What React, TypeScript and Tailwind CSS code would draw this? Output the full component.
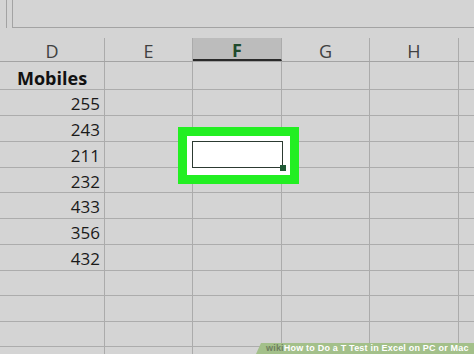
import React from "react";

const rowHeights = [28, 26, 26, 26, 25, 26, 26, 26, 25, 26, 25, 30];
const values: (string | null)[] = ["Mobiles", "255", "243", "211", "232", "433", "356", "432", null, null, null, null];

export default function App() {
  return (
    <div
      className="relative w-[474px] h-[354px] overflow-hidden bg-[#d4d4d4]"
      style={{ fontFamily: '"Open Sans", "Noto Sans", sans-serif' }}
    >
      {/* formula bar */}
      <div className="flex h-[28px]">
        <div className="w-[7px] border-r border-[#a3a3a3]" />
        <div className="w-[5px]" />
        <div className="flex-1 border-l border-b border-[#a3a3a3]" />
      </div>
      <div className="h-[10px]" />
      {/* header row */}
      <div className="grid grid-cols-[105px_88px_89px_88px_89px_1fr] h-[24px] border-b border-[#a3a3a3]">
        <div className="flex items-center justify-center pt-[3px] border-r border-[#ababab] text-[18px] text-[#404040] leading-none">D</div>
        <div className="flex items-center justify-center pt-[3px] border-r border-[#ababab] text-[18px] text-[#404040] leading-none">E</div>
        <div className="flex items-center justify-center pt-[3px] border-r border-[#ababab] bg-[#bcbcbc] border-b-2 border-b-[#2a2a2a] text-[18px] font-bold text-[#1f4a2c] leading-none">F</div>
        <div className="flex items-center justify-center pt-[3px] border-r border-[#ababab] text-[18px] text-[#404040] leading-none">G</div>
        <div className="flex items-center justify-center pt-[3px] border-r border-[#ababab] text-[18px] text-[#404040] leading-none">H</div>
        <div />
      </div>
      {/* data rows */}
      {rowHeights.map((h, i) => (
        <div
          key={i}
          className="grid grid-cols-[105px_88px_89px_88px_89px_1fr] border-b border-[#acacac]"
          style={{ height: h }}
        >
          <div
            className={
              i === 0
                ? "flex items-center pl-[17px] pt-[3px] border-r border-[#ababab] text-[18px] font-bold text-[#111]"
                : "flex items-center justify-end pr-[4px] pt-[1px] border-r border-[#ababab] text-[17px] text-[#1a1a1a]"
            }
          >
            {values[i]}
          </div>
          <div className="border-r border-[#ababab]" />
          <div className="border-r border-[#ababab]" />
          <div className="border-r border-[#ababab]" />
          <div className="border-r border-[#ababab]" />
          <div />
        </div>
      ))}

      {/* green highlight around selected cell */}
      <div className="absolute left-[178px] top-[127px] w-[121px] h-[57px] border-[9px] border-[#22ef22] bg-white">
        <div className="absolute left-[5px] top-[5px] w-[91px] h-[27px] border-[1.5px] border-[#2c3a31] bg-white">
          <div className="absolute right-[-4px] bottom-[-4px] w-[6px] h-[6px] bg-[#1f5a35]" />
        </div>
      </div>

      {/* wikiHow banner */}
      <div
        className="absolute right-0 bottom-0 h-[11px] w-[218px] bg-[#a3c08a] flex items-center pl-[10px]"
        style={{ clipPath: "polygon(5px 0, 100% 0, 100% 100%, 0 100%)" }}
      >
        <span
          className="text-[9px] font-bold leading-none text-white whitespace-nowrap tracking-[0.2px]"
          style={{ fontFamily: '"Liberation Sans", Arial, sans-serif' }}
        >
          <span className="text-[#6f7f60]">wiki</span>
          <span className="text-white">How</span> to Do a T Test in Excel on PC or Mac
        </span>
      </div>
    </div>
  );
}
